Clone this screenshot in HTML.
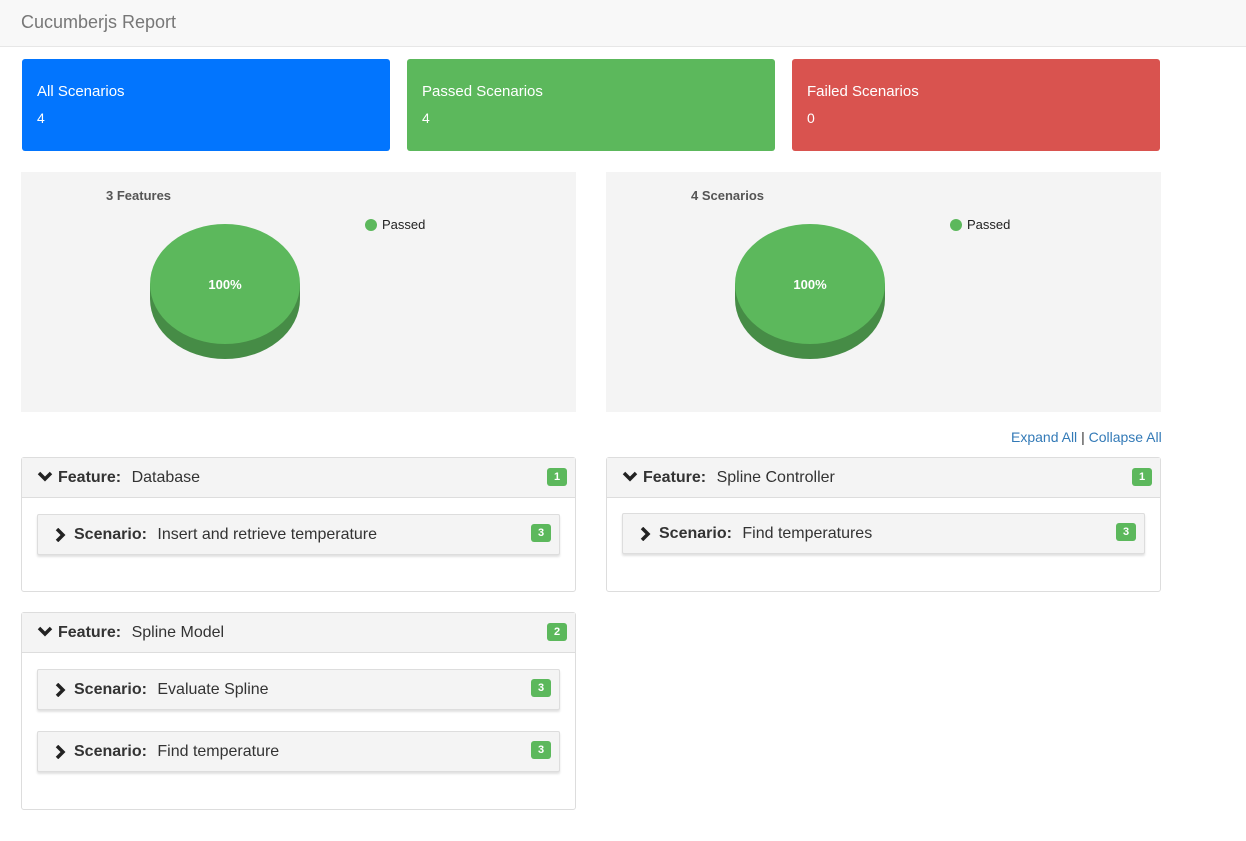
<!DOCTYPE html>
<html><head><meta charset="utf-8"><style>
body{margin:0;width:1246px;height:841px;background:#fff;font-family:"Liberation Sans",Arial,sans-serif;position:relative;overflow:hidden}
.a{position:absolute}
.nav{left:0;top:0;width:1246px;height:46px;background:#f8f8f8;border-bottom:1px solid #e7e7e7}
.nav span{position:absolute;left:21px;top:12px;font-size:18px;color:#777}
.card{top:59px;width:368px;height:92px;border-radius:3px;color:#fff;font-size:15px}
.card .t{position:absolute;left:15px;top:24px}
.card .n{position:absolute;left:15px;top:51px;font-size:14px}
.chart{top:172px;width:555px;height:240px;background:#f4f4f4}
.ct{font-size:13px;font-weight:bold;color:#555;position:absolute;top:16px}
.leg{position:absolute;top:45px;font-size:13px;color:#222}
.leg i{display:inline-block;width:12px;height:12px;border-radius:50%;background:#5cb85c;vertical-align:-2px;margin-right:5px}
.panel{border:1px solid #ddd;border-radius:3px;background:#fff;width:553px}
.ph{height:39px;background:#f4f4f4;border-bottom:1px solid #ddd;position:relative;font-size:16px;color:#333}
.lbl{position:absolute;top:11px;left:36px}
.lbl b{margin-right:6px}
.badge{position:absolute;right:8px;top:10px;background:#5cb85c;color:#fff;font-size:11px;font-weight:bold;border-radius:3px;width:20px;height:18px;text-align:center;line-height:18px}
.sc{position:absolute;left:15px;width:521px;height:39px;background:#f4f4f4;border:1px solid #ddd;border-radius:2px;box-shadow:0 2px 2px rgba(0,0,0,.12);font-size:16px;color:#333}
.sc .badge{top:9px}
.chev{position:absolute}
</style></head><body>
<div class="a nav"><span>Cucumberjs Report</span></div>
<div class="a card" style="left:22px;background:#0275fe"><div class="t">All Scenarios</div><div class="n">4</div></div>
<div class="a card" style="left:407px;background:#5cb85c"><div class="t">Passed Scenarios</div><div class="n">4</div></div>
<div class="a card" style="left:792px;background:#d9534f"><div class="t">Failed Scenarios</div><div class="n">0</div></div>

<div class="a chart" style="left:21px"><div class="ct" style="left:85px">3 Features</div><div class="leg" style="left:344px"><i></i>Passed</div>
<svg class="a" style="left:0;top:0" width="555" height="240"><ellipse cx="204" cy="127" rx="75" ry="60" fill="#468c46"/><rect x="129" y="112" width="150" height="15" fill="#468c46"/><ellipse cx="204" cy="112" rx="75" ry="60" fill="#5cb85c"/><text x="204" y="117" text-anchor="middle" font-size="13" font-weight="bold" fill="#fff" font-family="Liberation Sans">100%</text></svg></div>
<div class="a chart" style="left:606px"><div class="ct" style="left:85px">4 Scenarios</div><div class="leg" style="left:344px"><i></i>Passed</div>
<svg class="a" style="left:0;top:0" width="555" height="240"><ellipse cx="204" cy="127" rx="75" ry="60" fill="#468c46"/><rect x="129" y="112" width="150" height="15" fill="#468c46"/><ellipse cx="204" cy="112" rx="75" ry="60" fill="#5cb85c"/><text x="204" y="117" text-anchor="middle" font-size="13" font-weight="bold" fill="#fff" font-family="Liberation Sans">100%</text></svg></div>

<div class="a" style="left:1011px;top:429px;font-size:14px;color:#337ab7">Expand All <span style="color:#333">|</span> Collapse All</div>

<div class="a panel" style="left:21px;top:457px;height:133px">
 <div class="ph"><svg class="chev" style="left:15px;top:13px" width="16" height="12"><polyline points="2,2 8,8 14,2" fill="none" stroke="#222" stroke-width="3.5"/></svg><div class="lbl"><b>Feature:</b> Database</div><div class="badge">1</div></div>
 <div class="sc" style="top:56px"><svg class="chev" style="left:17px;top:13px" width="12" height="14"><polyline points="2,1 8,7 2,13" fill="none" stroke="#222" stroke-width="3.5"/></svg><div class="lbl"><b>Scenario:</b> Insert and retrieve temperature</div><div class="badge">3</div></div>
</div>
<div class="a panel" style="left:606px;top:457px;height:133px">
 <div class="ph"><svg class="chev" style="left:15px;top:13px" width="16" height="12"><polyline points="2,2 8,8 14,2" fill="none" stroke="#222" stroke-width="3.5"/></svg><div class="lbl"><b>Feature:</b> Spline Controller</div><div class="badge">1</div></div>
 <div class="sc" style="top:55px"><svg class="chev" style="left:17px;top:13px" width="12" height="14"><polyline points="2,1 8,7 2,13" fill="none" stroke="#222" stroke-width="3.5"/></svg><div class="lbl"><b>Scenario:</b> Find temperatures</div><div class="badge">3</div></div>
</div>
<div class="a panel" style="left:21px;top:612px;height:196px">
 <div class="ph"><svg class="chev" style="left:15px;top:13px" width="16" height="12"><polyline points="2,2 8,8 14,2" fill="none" stroke="#222" stroke-width="3.5"/></svg><div class="lbl"><b>Feature:</b> Spline Model</div><div class="badge">2</div></div>
 <div class="sc" style="top:56px"><svg class="chev" style="left:17px;top:13px" width="12" height="14"><polyline points="2,1 8,7 2,13" fill="none" stroke="#222" stroke-width="3.5"/></svg><div class="lbl"><b>Scenario:</b> Evaluate Spline</div><div class="badge">3</div></div>
 <div class="sc" style="top:118px"><svg class="chev" style="left:17px;top:13px" width="12" height="14"><polyline points="2,1 8,7 2,13" fill="none" stroke="#222" stroke-width="3.5"/></svg><div class="lbl"><b>Scenario:</b> Find temperature</div><div class="badge">3</div></div>
</div>
</body></html>
